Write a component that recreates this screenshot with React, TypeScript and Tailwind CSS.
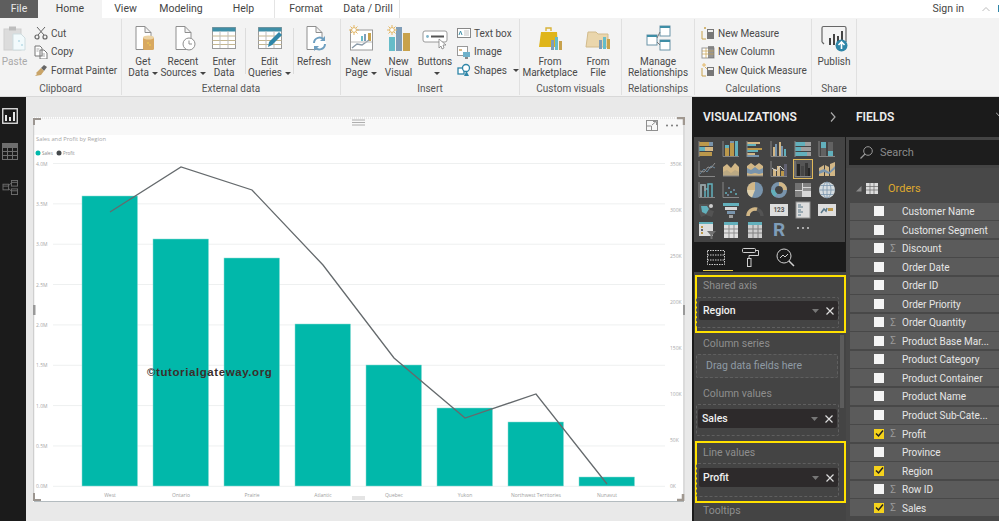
import React from "react";

type R = [number, number, number, number, string];
const rects = (a: R[]) => a.map((r, i) => <rect key={i} x={r[0]} y={r[1]} width={r[2]} height={r[3]} fill={r[4]} />);

const T = "#66bcc9", A = "#c8a24c", B = "#7f9db8", G = "#a9a9a9", L = "#e2c48e", W = "#e8e8e8";

function Ico({ s = 26, children, vb = 26 }: { s?: number; vb?: number; children: React.ReactNode }) {
  return <svg width={s} height={s} viewBox={`0 0 ${vb} ${vb}`} className="shrink-0">{children}</svg>;
}
const Doc = () => <path d="M6 1.5h9l6 6v17H6z M15 1.5v6h6" fill="#fff" stroke="#8f8f8f" strokeWidth="1" />;
const TableI = ({ pencil }: { pencil?: boolean }) => (
  <>
    <rect x="1.5" y="2.5" width="23" height="21" fill="#fff" stroke="#9a9a9a" />
    <rect x="1.5" y="2.5" width="23" height="4" fill="#3f8ea6" />
    {[11, 15.5, 19.5].map(y => <path key={y} d={`M1.5 ${y}h23`} stroke="#c4b68f" />)}
    {[9, 17].map(x => <path key={x} d={`M${x} 6v17`} stroke="#bdbdbd" />)}
    {pencil && <path d="M11 22l1-5L22 7l3 3-10 10z" fill="#2f86a8" />}
  </>
);
const Sun = () => <g stroke="#e3b766" strokeWidth="1"><path d="M1 5h10M6 0v10M2.5 1.5l7 7M9.5 1.5l-7 7" /><circle cx="6" cy="5" r="2.4" fill="#fff" /></g>;

const bigIcons: Record<string, React.ReactNode> = {
  paste: <Ico><rect x="2" y="4" width="17" height="21" fill="#dcdcdc" stroke="#cfcfcf" /><rect x="7" y="1.5" width="7" height="4" fill="#bdbdbd" /><path d="M11 9h8l4 4v12H11z" fill="#f2fafc" stroke="#cfdde0" /><circle cx="17" cy="16" r=".7" fill="#7ab9d0" /><circle cx="20" cy="20" r=".7" fill="#7ab9d0" /></Ico>,
  get: <Ico><Doc /><rect x="13" y="12" width="11" height="13" rx="1.5" fill="#d8a860" /><ellipse cx="18.5" cy="12.5" rx="5.5" ry="2" fill="#ecd3a4" /><circle cx="18" cy="18" r=".7" fill="#ffe34d" /><circle cx="20" cy="20" r=".7" fill="#ffe34d" /></Ico>,
  recent: <Ico><Doc /><circle cx="19" cy="19" r="6" fill="#fff" stroke="#8f8f8f" /><path d="M19 15.5V19h3" fill="none" stroke="#8f8f8f" /></Ico>,
  enter: <Ico><TableI /></Ico>,
  edit: <Ico><TableI pencil /></Ico>,
  refresh: <Ico><Doc /><circle cx="18.5" cy="18.5" r="6.5" fill="#fff" /><path d="M13 18a5.5 5.5 0 0 1 10-3M24 19a5.5 5.5 0 0 1-10 3" fill="none" stroke="#6e9fc0" strokeWidth="2" /><path d="M24 11v5h-5zM13 26v-5h5z" fill="#6e9fc0" /></Ico>,
  page: <Ico><rect x="2.5" y="5" width="22" height="20" fill="#fff" stroke="#9a9a9a" />{rects([[13, 11, 2, 5, T], [16, 9, 2, 7, B], [20, 8, 3, 8, A]])}<path d="M4 23l5-4 5 1 7-5" fill="none" stroke="#8a9aa8" strokeWidth="1.4" /><path d="M3 17h21" stroke="#bbb" /><Sun /></Ico>,
  visual: <Ico>{rects([[3, 12, 6, 14, T], [10, 2, 6, 24, B], [17, 8, 7, 18, A]])}<Sun /></Ico>,
  buttons: <Ico><rect x="1" y="6" width="24" height="11" rx="2" fill="#fff" stroke="#9a9a9a" /><circle cx="5.5" cy="11.5" r="1.4" fill="#7fb3c8" /><rect x="9" y="10.5" width="13" height="2" fill="#555" /><path d="M17 14v9l2-2 1 3 2-1-1-3h3z" fill="#fff" stroke="#777" strokeWidth=".7" /></Ico>,
  market: <Ico><path d="M9 6V3h5v3" fill="none" stroke="#d8b33a" strokeWidth="1.4" /><path d="M4 7h16l1 15H2z" fill="#dfb51a" />{rects([[14, 15, 3, 10, B], [18, 12, 3, 13, T], [22, 16, 3, 9, A]])}</Ico>,
  file: <Ico><path d="M1 22l2-15h8l2 2h10v13z" fill="#ead6ac" stroke="#d2bb8c" />{rects([[14, 15, 3, 9, B], [18, 12, 3, 12, T], [22, 14, 3, 10, A]])}</Ico>,
  manage: <Ico><rect x="2" y="10" width="10" height="10" fill="#fff" stroke="#6b94a8" /><rect x="2" y="10" width="10" height="2" fill="#3f8ea6" /><rect x="15" y="1" width="10" height="10" fill="#fff" stroke="#6b94a8" /><rect x="15" y="1" width="10" height="2" fill="#3f8ea6" /><rect x="15" y="15" width="10" height="10" fill="#fff" stroke="#6b94a8" /><rect x="15" y="15" width="10" height="2" fill="#3f8ea6" /><path d="M12 13l3-6M12 17l3 3" stroke="#777" /></Ico>,
  publish: <Ico s={28} vb={28}><path d="M2 17V3a1.5 1.5 0 0 1 1.5-1.5h21A1.5 1.5 0 0 1 26 3v14M2 17l2 2" fill="none" stroke="#666" strokeWidth="1.2" />{rects([[9, 13, 2, 7, "#444"], [13, 9, 2, 11, "#444"], [17, 11, 2, 9, "#444"], [21, 6, 2, 10, "#444"]])}<circle cx="21.5" cy="20.5" r="6" fill="#2f86a8" /><path d="M21.5 24v-7M18.5 20l3-3 3 3" fill="none" stroke="#fff" strokeWidth="1.6" /></Ico>,
};

const smallIcons: Record<string, React.ReactNode> = {
  cut: <Ico s={14} vb={14}><path d="M3 1l7 8M11 1L4 9" stroke="#666" fill="none" /><circle cx="3" cy="11" r="2" fill="none" stroke="#666" strokeWidth="1.2" /><circle cx="11" cy="11" r="2" fill="none" stroke="#666" strokeWidth="1.2" /></Ico>,
  copy: <Ico s={14} vb={14}><path d="M1 1h5l2 2v8H1zM6 5h4l3 3v6H6z" fill="#fff" stroke="#777" /><path d="M8 9h3M8 11h3M2.500 4h3M2.500 6h2" stroke="#888" strokeWidth=".7" /></Ico>,
  painter: <Ico s={14} vb={14}><path d="M7 5l3-3 3 2-3 4z" fill="#666" /><path d="M7 5l3 3-3 4-6 1 2-2-1-1z" fill="#c9a468" /></Ico>,
  text: <Ico s={14} vb={14}><rect x=".5" y="2.500" width="13" height="9" fill="#fff" stroke="#888" /><path d="M2 9l1.500-4L5 9" fill="none" stroke="#3f8ea6" /><path d="M7 5h5M7 7h5M7 9h5" stroke="#aaa" strokeWidth=".7" /></Ico>,
  image: <Ico s={14} vb={14}><rect x=".5" y="1.500" width="10" height="9" fill="#fff" stroke="#999" /><rect x="2" y="4" width="3" height="2" fill="#d8b88a" /><rect x="6" y="7" width="7" height="5" fill="#6fb1ca" /><rect x="8" y="12" width="3" height="2" fill="#888" /></Ico>,
  shapes: <Ico s={14} vb={14}><rect x="1" y="5" width="6" height="6" fill="#fff" stroke="#2f86a8" strokeWidth="1.300" /><circle cx="9" cy="5" r="3.500" fill="#fff" stroke="#2f86a8" strokeWidth="1.300" /><path d="M7 13l2.500-5 2.500 5z" fill="#2f86a8" /></Ico>,
  measure: <Ico s={14} vb={14}><path d="M1 5v8h4M4 1v2M3 2h2" stroke="#c8a24c" fill="none" /><rect x="6" y="3" width="7" height="10" fill="#777" /><rect x="7" y="4" width="5" height="2" fill="#eee" /></Ico>,
  column: <Ico s={14} vb={14}><rect x="1" y="3" width="12" height="10" fill="#fff" stroke="#999" /><rect x="7" y="1" width="6" height="12" fill="#666" opacity=".7" /><path d="M1 6h12M1 9h12M5 3v10" stroke="#c8a24c" strokeWidth=".7" /></Ico>,
  quick: <Ico s={14} vb={14}><path d="M1 5v8h4" stroke="#c8a24c" fill="none" /><path d="M3 0v4M1 2h4" stroke="#e3b766" /><rect x="6" y="4" width="7" height="9" fill="#777" /><rect x="7" y="5" width="5" height="2" fill="#eee" /><path d="M4 4l2 2" stroke="#e3b766" /></Ico>,
};

function Caret({ c = "#444" }: { c?: string }) {
  return <svg width="6" height="3" viewBox="0 0 6 3" className="inline-block ml-[3px] align-middle"><path d="M0 0h6L3 3z" fill={c} /></svg>;
}

function Big({ icon, l1, l2, caret, className }: { icon: string; l1: string; l2?: string; caret?: boolean; className: string }) {
  return (
    <div className={`flex flex-col items-center ${className}`}>
      <div className="h-[28px] flex items-start justify-center">{bigIcons[icon]}</div>
      <div className="h-[11px] mt-[3px] leading-[11px] whitespace-nowrap">{l1}</div>
      <div className="h-[11px] leading-[11px] whitespace-nowrap">{l2}{caret && <Caret />}</div>
    </div>
  );
}
function Small({ icon, text, caret }: { icon: string; text: string; caret?: boolean }) {
  return (
    <div className="h-[18.500px] flex items-center gap-[3px] whitespace-nowrap">
      {smallIcons[icon]}<span>{text}</span>{caret && <Caret />}
    </div>
  );
}
function Group({ label, className, children }: { label: string; className: string; children: React.ReactNode }) {
  return (
    <div className={`flex flex-col border-r border-[#e0e0e0] h-[76px] ${className}`}>
      <div className="flex flex-1 pt-[6px]">{children}</div>
      <div className="h-[12px] leading-[12px] text-center text-[#555]">{label}</div>
    </div>
  );
}
const Sep = () => <div className="w-px h-[46px] mt-[3px] bg-[#dcdcdc] shrink-0" />;

function Ribbon() {
  return (
    <div className="h-[97px] shrink-0 text-[10px] text-[#4a4a4a]">
      <div className="h-[18px] bg-white flex items-stretch text-[10.500px] leading-[18px] text-[#444]">
        <div className="w-[38px] bg-[#5e5e5e] text-[#e8e8e8] text-center">File</div>
        <div className="w-[64px] bg-[#f3f3f3] text-center">Home</div>
        <div className="w-[47px] text-center">View</div>
        <div className="w-[62px] text-center pl-[2px]">Modeling</div>
        <div className="w-[64px] text-center pl-[2px] border-r border-[#e4e4e4]">Help</div>
        <div className="w-[62px] text-center">Format</div>
        <div className="w-[63px] text-center border-r border-[#e4e4e4]">Data / Drill</div>
        <div className="flex-1" />
        <div className="mr-[18px]">Sign in</div>
        <svg width="8" height="18" viewBox="0 0 8 18" className="mr-[8px]"><path d="M0.500 11l3.500-3.500L7.500 11" fill="none" stroke="#bbb" /></svg>
        <div className="w-[1px] h-[7px] mt-[5px] bg-[#2f86a8]" />
      </div>
      <div className="h-[79px] bg-[#f3f3f3] border-b border-[#d8d8d8] flex pt-px">
        <Group label="Clipboard" className="w-[122px]">
          <div className="w-[27px] pl-[2px]"><div className="w-[25px] flex flex-col items-center"><div className="h-[28px]">{bigIcons.paste}</div><div className="mt-[3px] leading-[11px] text-[#aaa]">Paste</div></div></div>
          <div className="ml-[7px] -mt-[1px]"><Small icon="cut" text="Cut" /><Small icon="copy" text="Copy" /><Small icon="painter" text="Format Painter" /></div>
        </Group>
        <Group label="External data" className="w-[219px]">
          <Big icon="get" l1="Get" l2="Data" caret className="w-[40px] ml-[1px]" />
          <Big icon="recent" l1="Recent" l2="Sources" caret className="w-[40px]" />
          <Big icon="enter" l1="Enter" l2="Data" className="w-[42px]" />
          <Sep />
          <Big icon="edit" l1="Edit" l2="Queries" caret className="w-[47px]" />
          <Sep />
          <Big icon="refresh" l1="Refresh" className="w-[40px]" />
        </Group>
        <Group label="Insert" className="w-[179px]">
          <Big icon="page" l1="New" l2="Page" caret className="w-[38px] ml-[1px]" />
          <Big icon="visual" l1="New" l2="Visual" className="w-[37px]" />
          <Big icon="buttons" l1="Buttons" l2="" caret className="w-[36px]" />
          <div className="ml-[4px] -mt-[1px]"><Small icon="text" text="Text box" /><Small icon="image" text="Image" /><Small icon="shapes" text="Shapes" caret /></div>
        </Group>
        <Group label="Custom visuals" className="w-[102px]">
          <Big icon="market" l1="From" l2="Marketplace" className="w-[60px]" />
          <Big icon="file" l1="From" l2="File" className="w-[36px]" />
        </Group>
        <Group label="Relationships" className="w-[73px]">
          <Big icon="manage" l1="Manage" l2="Relationships" className="w-[72px]" />
        </Group>
        <Group label="Calculations" className="w-[117px]">
          <div className="ml-[6px] -mt-[1px]"><Small icon="measure" text="New Measure" /><Small icon="column" text="New Column" /><Small icon="quick" text="New Quick Measure" /></div>
        </Group>
        <Group label="Share" className="w-[45px]">
          <Big icon="publish" l1="Publish" className="w-[44px]" />
        </Group>
      </div>
    </div>
  );
}

function Rail() {
  return (
    <div className="w-[26px] shrink-0 bg-[#1b1b1b] flex flex-col items-start pl-[2px] pt-[11px] gap-[19px]">
      <svg width="16" height="16" viewBox="0 0 16 16"><rect x=".75" y=".75" width="14.500" height="14.500" fill="none" stroke="#e8e8e8" strokeWidth="1.300" /><path d="M3 7h2v6H3zM7 9h2v4H7zM11 4h2v9h-2z" fill="#e8e8e8" /></svg>
      <svg width="16" height="17" viewBox="0 0 16 17"><rect x=".5" y=".5" width="15" height="16" fill="none" stroke="#6e6e6e" /><path d="M.5 4.500h15M.5 8.500h15M.5 12.500h15M5.500 4v13M10.500 4v13" stroke="#6e6e6e" /><rect x="1" y="1" width="14" height="3" fill="#6e6e6e" /></svg>
      <svg width="17" height="15" viewBox="0 0 17 16" className="mt-[1px]" fill="none" stroke="#6e6e6e"><rect x=".5" y="4.500" width="6" height="6" /><rect x="9.500" y=".5" width="6.500" height="6" /><rect x="9.500" y="9.500" width="6.500" height="6" /><path d="M6.500 6l3-3M6.500 9l3 3M.5 6.500h6M9.500 2.500h6.500M9.500 11.500h6.500" /></svg>
    </div>
  );
}

const bars = [
  ["West", 82, 196], ["Ontario", 153, 239], ["Prairie", 224, 258], ["Atlantic", 295, 324],
  ["Quebec", 366, 365], ["Yukon", 437, 408], ["Northwest Territories", 508, 422], ["Nunavut", 579, 477],
] as [string, number, number][];
const left = ["4.0M", "3.5M", "3.0M", "2.5M", "2.0M", "1.5M", "1.0M", "0.5M", "0.0M"];
const right = [["350K", 164], ["300K", 210], ["250K", 256], ["200K", 302], ["150K", 348], ["100K", 394], ["50K", 440], ["0K", 486]] as [string, number][];

function Visual() {
  return (
    <svg width="652" height="385" viewBox="33 117 652 385" className="block" fontFamily="'Open Sans',sans-serif">
      <rect x="33" y="117" width="652" height="385" fill="#fff" />
      <rect x="34" y="118" width="650" height="17" fill="#f8f8f8" />
      <path d="M33.500 118V501M684 118V501" stroke="#cfcfcf" strokeWidth="1.500" />
      <path d="M34 118H684" stroke="#d2d2d2" strokeDasharray="1 1" />
      <path d="M34 501.500H684" stroke="#b4bcc0" strokeWidth="1.200" />
      <path d="M33 124v-6h7M33 118h3" fill="none" stroke="#9b9590" strokeWidth="2" transform="translate(1 1)" />
      <path d="M677 118h7v7" fill="none" stroke="#a09890" strokeWidth="2.500" />
      <path d="M34 493v7h7" fill="none" stroke="#9b9590" strokeWidth="2" />
      <path d="M677 500h6v-6" fill="none" stroke="#a09890" strokeWidth="2.500" />
      <path d="M352 120h13M352 122.500h13M352 125h13" stroke="#9a9a9a" strokeWidth=".8" />
      <path d="M352 497h13M352 499h13" stroke="#bbb" strokeWidth=".8" />
      <rect x="33" y="305" width="2.500" height="10" fill="#999" />
      <rect x="683" y="305" width="2.500" height="10" fill="#999" />
      <g fill="none" stroke="#8f8f8f"><rect x="646.500" y="120.500" width="11" height="10" /><path d="M646.500 126h5v4.500M652 125l4-3.500M653 121.500h3.500V125" /></g>
      <g fill="#777"><circle cx="667" cy="125.500" r="1" /><circle cx="672" cy="125.500" r="1" /><circle cx="677" cy="125.500" r="1" /></g>
      <text x="36" y="141" fontSize="5.800" fill="#a6a6a6">Sales and Profit by Region</text>
      <circle cx="38" cy="153" r="2.500" fill="#01b8aa" /><text x="42" y="155" fontSize="4.500" fill="#8a8a8a">Sales</text>
      <circle cx="59" cy="153" r="2.500" fill="#44494b" /><text x="63" y="155" fontSize="4.500" fill="#8a8a8a">Profit</text>
      {left.map((t, i) => {
        const y = 163.500 + i * 40.350;
        return <g key={t}><path d={`M53 ${y}H665`} stroke="#eef0f0" /><text x="36" y={y + 2} fontSize="5" fill="#a8a8a8">{t}</text></g>;
      })}
      {right.map(([t, y]) => <text key={t} x="670" y={y + 2} fontSize="5" fill="#a8a8a8">{t}</text>)}
      {bars.map(([n, x, y]) => (
        <g key={n}>
          <rect x={x} y={y} width="55.500" height={486 - y} fill="#01b8aa" stroke="#8ddcd4" strokeWidth=".5" />
          <text x={x + 28} y="497" fontSize="5" fill="#a0a0a0" textAnchor="middle">{n}</text>
        </g>
      ))}
      <polyline points="110,212 181,167 252,190 323,265 394,358 465,418 536,394 607,484" fill="none" stroke="#656a6d" strokeWidth="1.300" />
      <text x="147" y="375.500" fontSize="11.500" fontWeight="700" letterSpacing=".58" fill="#3b2f2c" fontFamily="'Liberation Sans',sans-serif">©tutorialgateway.org</text>
    </svg>
  );
}

const ax = "#8d8d8d";
const V = ({ children }: { children: React.ReactNode }) => <svg width="18" height="18" viewBox="0 0 18 18" className="opacity-90">{children}</svg>;
const axes = <path d="M1 1v15.500h16" fill="none" stroke={ax} />;
const vizIcons: React.ReactNode[] = [
  <V>{rects([[1, 2, 10, 4, A], [11, 2, 4, 4, B], [1, 7, 6, 4, T], [7, 7, 8, 4, L], [1, 12, 13, 4, A]])}<path d="M1 1v16" stroke={ax} /></V>,
  <V>{axes}{rects([[3, 8, 4, 8, A], [8, 3, 4, 13, A], [13, 1, 3, 15, T], [3, 5, 4, 3, T], [8, 1, 4, 2, B]])}</V>,
  <V>{rects([[1, 2, 13, 2, L], [1, 4, 9, 2, T], [1, 8, 15, 2, A], [1, 10, 11, 2, T], [1, 13, 8, 2, L], [1, 15, 12, 2, B]])}<path d="M1 1v16" stroke={ax} /></V>,
  <V>{axes}{rects([[3, 7, 2, 9, L], [5, 4, 2, 12, B], [9, 2, 2, 14, L], [11, 6, 2, 10, B], [14, 9, 2, 7, T]])}</V>,
  <V>{rects([[1, 2, 10, 4, T], [11, 2, 6, 4, G], [1, 7, 6, 4, T], [7, 7, 10, 4, G], [1, 12, 12, 4, T], [13, 12, 4, 4, G]])}<path d="M1 1v16" stroke={ax} /></V>,
  <V>{axes}{rects([[3, 2, 5, 6, T], [3, 8, 5, 8, "#666"], [10, 2, 5, 9, "#666"], [10, 11, 5, 5, T]])}</V>,
  <V>{axes}<path d="M2 14l4-5 3 3 4-6 4 2" fill="none" stroke="#6f8fa6" /><path d="M2 11l4 1 4-5 3 1 4-5" fill="none" stroke="#999" /></V>,
  <V><path d="M1 16V7l4-3 4 4 4-5 4 4v9z" fill={L} /><path d="M1 16v-4l4-2 4 3 4-3 4 2v4z" fill="#c8b48a" /><path d="M1 16h16" stroke={ax} /></V>,
  <V><path d="M1 16V6l4-3 4 3 4-3 4 3v10z" fill={L} /><path d="M1 13V8l4 2 4-3 4 3 4-2v5l-4 1-4-1-4 1z" fill={B} /><path d="M1 16h16" stroke={ax} /></V>,
  <V>{axes}{rects([[3, 9, 3, 7, L], [7, 6, 3, 10, L], [11, 11, 3, 5, A], [14, 4, 3, 12, "#667"]])}<path d="M2 8l4 3 4-5 4 4" fill="none" stroke="#ddd" /></V>,
  <V>{axes}{rects([[3, 4, 3, 12, "#222"], [7, 6, 3, 10, "#444"], [11, 3, 3, 13, "#333"], [14, 8, 2, 8, "#222"]])}</V>,
  <V><path d="M1 8l5-3v11H1zM7 5l4 2v9H7zM12 4l5-2v14h-5z" fill={L} /><path d="M1 11l5-2 5 3 6-6v3l-6 5-5-2-5 2z" fill={B} /></V>,
  <V>{axes}<path d="M3 16V4h4v12M7 8h3M10 16V3h4v13" fill="none" stroke={T} strokeWidth="1.500" /><path d="M3 16V4h4v6" fill="none" stroke="#aaa" strokeWidth="1.500" /></V>,
  <V>{axes}{[[4, 12], [7, 7], [9, 11], [12, 9], [14, 13], [6, 14]].map(([x, y], i) => <circle key={i} cx={x} cy={y} r="1" fill={i % 2 ? B : T} />)}</V>,
  <V><circle cx="9" cy="9" r="8" fill={B} /><path d="M9 9V1a8 8 0 0 0-8 8z" fill={L} /><path d="M9 9H1a8 8 0 0 0 5 7.400z" fill="#f0e0b8" /></V>,
  <V><circle cx="9" cy="9" r="6" fill="none" stroke={B} strokeWidth="4" /><path d="M9 3a6 6 0 0 1 6 6" fill="none" stroke={L} strokeWidth="4" /><path d="M3 9a6 6 0 0 0 3 5" fill="none" stroke={T} strokeWidth="4" /></V>,
  <V>{rects([[1, 2, 16, 14, W], [1, 2, 7, 7, "#777"], [9, 2, 8, 4, "#888"], [9, 7, 8, 3, "#999"], [1, 10, 7, 6, "#888"]])}</V>,
  <V><circle cx="9" cy="9" r="8" fill="#e6eef2" /><path d="M1 9h16M9 1v16M3 4.500h12M3 13.500h12" stroke={B} strokeWidth=".8" /><ellipse cx="9" cy="9" rx="4" ry="8" fill="none" stroke={B} strokeWidth=".8" /></V>,
  <V><path d="M1 3h9l3 2-1 4 4 1-2 6-6-2-5 2-2-6z" fill="#555" /><path d="M3 5h6l2 3-3 5-4-2z" fill={T} /><circle cx="13" cy="5" r="2" fill="#ddd" /></V>,
  <V><path d="M1 2h16v3H1z" fill={T} /><path d="M3 6h12v3H3z" fill={W} /><path d="M5 10h8v3H5z" fill={B} /><path d="M7 14h4v3H7z" fill={G} /></V>,
  <V><path d="M2 15a7 7 0 0 1 14 0" fill="none" stroke="#555" strokeWidth="3.500" /><path d="M2 15a7 7 0 0 1 9-6.700" fill="none" stroke={L} strokeWidth="3.500" /></V>,
  <V><rect x="0" y="3" width="18" height="12" fill="#eee" /><text x="9" y="11" fontSize="6.500" fontWeight="700" fill="#555" textAnchor="middle">123</text></V>,
  <V><rect x="2" y="1" width="14" height="16" fill="#eee" stroke="#999" /><path d="M4 4h3M4 6h5M4 9h3M4 11h5M4 14h3" stroke="#5a7e92" /></V>,
  <V><rect x="0" y="3" width="18" height="12" fill="#eee" /><path d="M3 12l3-4 2 2 1-3" fill="none" stroke="#5a7e92" strokeWidth="1.500" /><path d="M10 7h5v3h-5z" fill={A} /></V>,
  <V><rect x="1" y="1" width="14" height="14" fill="#eee" /><rect x="1" y="1" width="14" height="2" fill={T} />{rects([[3, 5, 2, 2, A], [3, 8, 2, 2, "#667"], [3, 11, 2, 2, A]])}<path d="M9 10h9l-3.500 4v4h-2v-4z" fill="#777" /></V>,
  <V><rect x="2" y="1" width="14" height="16" fill="#f0f0f0" /><rect x="2" y="1" width="14" height="3" fill={T} /><path d="M2 8h14M2 12h14M7 4v13M12 4v13" stroke="#999" /></V>,
  <V><rect x="2" y="1" width="14" height="16" fill="#ddd" /><rect x="2" y="1" width="14" height="3" fill={T} /><path d="M2 8h14M2 12h14M7 4v13M12 4v13" stroke="#888" /></V>,
  <div className="w-[18px] h-[18px] text-center text-[19px] leading-[18px] font-bold text-[#7f9db8]">R</div>,
  <V><g fill="#ddd"><circle cx="4" cy="7" r="1" /><circle cx="9" cy="7" r="1" /><circle cx="14" cy="7" r="1" /></g></V>,
];

function Pill({ text }: { text: string }) {
  return (
    <div className="h-[19px] bg-[#2d2a2b] rounded-[2px] flex items-center text-[10.500px] font-medium text-[#f0f0f0] pl-[4px] pr-[4px]">
      <span className="flex-1 pt-px">{text}</span>
      <svg width="7" height="4" viewBox="0 0 7 4" className="mr-[7px]"><path d="M0 0h7L3.500 4z" fill="#777" /></svg>
      <svg width="8" height="8" viewBox="0 0 8 8"><path d="M.5.5l7 7M7.500.5l-7 7" stroke="#ddd" strokeWidth="1.200" /></svg>
    </div>
  );
}
const wellLabel = "h-[14px] leading-[14px] text-[#8e8e8e] text-[10.500px] pl-[8px] pt-px";
const dashed = "border border-dashed border-[#5f5f5f] rounded-[2px]";

function VizPanel() {
  return (
    <div className="w-[154px] shrink-0 bg-[#1b1b1b] flex flex-col relative">
      <div className="h-[40px] shrink-0 flex items-center justify-between pl-[11px] pr-[10px] bg-[radial-gradient(#383838_0.6px,transparent_0.6px)] bg-[length:4px_4px]">
        <span className="text-[12px] font-semibold text-[#ededed]">VISUALIZATIONS</span>
        <svg width="6" height="10" viewBox="0 0 6 10"><path d="M1 .5l4 4.500-4 4.500" fill="none" stroke="#aaa" strokeWidth="1.200" /></svg>
      </div>
      <div className="h-[105px] shrink-0 bg-[#444] ml-[2px] mr-[1px] pt-[2px] pl-[1px] grid grid-cols-[repeat(6,24px)] auto-rows-[20.250px]">
        {vizIcons.map((ic, i) => (
          <div key={i} className="flex items-center justify-center">
            {i === 10 ? <div className="border border-[#e0b95a] bg-[#555] flex">{ic}</div> : ic}
          </div>
        ))}
      </div>
      <div className="h-[30px] shrink-0 relative flex items-center pl-[15px] gap-[16px]">
        <svg width="19" height="17" viewBox="0 0 19 17" fill="none" stroke="#cfcfcf" strokeDasharray="1.500 1"><rect x=".5" y="1.500" width="17" height="14" /><path d="M.5 6h17M.5 11h17" /></svg>
        <svg width="18" height="19" viewBox="0 0 18 19" fill="none" stroke="#cfcfcf"><rect x=".5" y=".5" width="13" height="4" rx="1" /><path d="M13.500 2.500h3v5H7v3" /><rect x="5.500" y="10.500" width="3.500" height="8" /></svg>
        <svg width="19" height="19" viewBox="0 0 19 19" fill="none" stroke="#cfcfcf"><circle cx="8" cy="8" r="7" /><path d="M13 13l5 5" strokeWidth="1.500" /><path d="M4 10l3-3 2 2 3-3" /></svg>
        <div className="absolute left-[11px] bottom-[1px] w-[30px] h-px bg-[#e6c94a]" />
      </div>
      <div className="flex-1 bg-[#444] ml-[2px] relative">
        <div className="absolute left-[146px] top-[63px] w-[4px] h-[73px] bg-[#5c5c5c]" />
        <div className="pt-[3px] pl-[1px]">
          <div className="h-[58px] w-[151px] border-2 border-[#ffe100] pt-[2px]">
            <div className="h-[16px] text-[#8e8e8e] text-[10.500px] leading-[14px] pl-[6px]">Shared axis</div>
            <div className={`${dashed} w-[143px] h-[31px] mt-[2px] ml-[-1px] pt-[3px] pl-[2px]`}><div className="w-[139px]"><Pill text="Region" /></div></div>
          </div>
          <div className={`${wellLabel} mt-[3px]`}>Column series</div>
          <div className={`${dashed} h-[24px] w-[142px] ml-[1px] mt-[4px] bg-[#4a4a4a] flex items-center pl-[9px] text-[10.500px] text-[#8f9ba5]`}>Drag data fields here</div>
          <div className={`${wellLabel} mt-[8px]`}>Column values</div>
          <div className={`${dashed} h-[32px] w-[143px] ml-[1px] mt-[4px] pt-[4px] pl-[1px]`}><div className="w-[139px]"><Pill text="Sales" /></div></div>
          <div className="h-[62px] w-[151px] border-2 border-[#ffe100] mt-[5px] pt-[3px]">
            <div className="h-[16px] text-[#8e8e8e] text-[10.500px] leading-[14px] pl-[6px]">Line values</div>
            <div className={`${dashed} w-[143px] h-[34px] mt-[1px] ml-[-1px] pt-[4px] pl-[2px]`}><div className="w-[139px]"><Pill text="Profit" /></div></div>
          </div>
          <div className={wellLabel}>Tooltips</div>
        </div>
      </div>
    </div>
  );
}

const fields: [string, boolean, boolean][] = [
  ["Customer Name", false, false], ["Customer Segment", false, false], ["Discount", true, false], ["Order Date", false, false],
  ["Order ID", false, false], ["Order Priority", false, false], ["Order Quantity", true, false], ["Product Base Mar...", true, false],
  ["Product Category", false, false], ["Product Container", false, false], ["Product Name", false, false], ["Product Sub-Cate...", false, false],
  ["Profit", true, true], ["Province", false, false], ["Region", false, true], ["Row ID", true, false], ["Sales", true, true],
];

function FieldsPanel() {
  return (
    <div className="flex-1 min-w-0 bg-[#1b1b1b] flex flex-col overflow-hidden">
      <div className="h-[40px] shrink-0 flex items-center pl-[10px] bg-[radial-gradient(#383838_0.6px,transparent_0.6px)] bg-[length:4px_4px]">
        <span className="text-[12px] font-semibold text-[#ededed] flex-1">FIELDS</span>
        <svg width="3" height="10" viewBox="0 0 3 10"><path d="M0 .5l4 4.500" fill="none" stroke="#aaa" /></svg>
      </div>
      <div className="flex-1 bg-[#484848] pl-[3px]">
        <div className="h-[31px] -ml-[3px] pl-[3px] pt-[3px] bg-[#444]">
          <div className="h-[25px] bg-[#1d1d1d] flex items-center pl-[11px] gap-[7px] text-[11px] text-[#8a8a8a]">
            <svg width="13" height="13" viewBox="0 0 13 13" fill="none" stroke="#999"><circle cx="8" cy="5" r="4.300" /><path d="M5 8l-4.500 4.500" strokeWidth="1.300" /></svg>
            <span className="pt-[2px]">Search</span>
          </div>
        </div>
        <div className="h-[34.500px] flex items-center pl-[7px] pt-[7px]">
          <svg width="6" height="6" viewBox="0 0 6 6"><path d="M5.500 0v5.500H0z" fill="#8a8a8a" /></svg>
          <svg width="12" height="11" viewBox="0 0 12 11" className="ml-[4px]"><rect width="12" height="11" fill="#ddd" /><path d="M0 3.500h12M0 7h12M4 0v11M8 0v11" stroke="#666" strokeWidth=".7" /></svg>
          <span className="ml-[10px] text-[#dfa92e] text-[11px]">Orders</span>
        </div>
        <div className="flex flex-col gap-[1.550px]">
          {fields.map(([n, sig, on]) => (
            <div key={n} className="h-[17px] bg-[#5b5b5b] flex items-center ml-[1px] text-[10px] text-[#e6e6e6] whitespace-nowrap">
              <div className={`ml-[24px] w-[10px] h-[10px] flex items-center justify-center ${on ? "bg-[#f5d21c]" : "bg-[#f4f4f4]"}`}>
                {on && <svg width="9" height="9" viewBox="0 0 9 9"><path d="M1 4.500l2.500 2.500L8 1.500" fill="none" stroke="#222" strokeWidth="1.500" /></svg>}
              </div>
              <div className="w-[18px] text-center text-[#9a9a9a]">{sig ? "Σ" : ""}</div>
              <span className="pt-px">{n}</span>
            </div>
          ))}
        </div>
      </div>
    </div>
  );
}

export default function App() {
  return (
    <div className="w-full h-[521px] overflow-hidden flex flex-col font-['Roboto',sans-serif] bg-[#e9e9e9]">
      <Ribbon />
      <div className="flex flex-1 min-h-0">
        <Rail />
        <div className="w-[666px] shrink-0 pl-[7px] pt-[20px] bg-[#e9e9e9]"><Visual /></div>
        <VizPanel />
        <FieldsPanel />
      </div>
    </div>
  );
}
